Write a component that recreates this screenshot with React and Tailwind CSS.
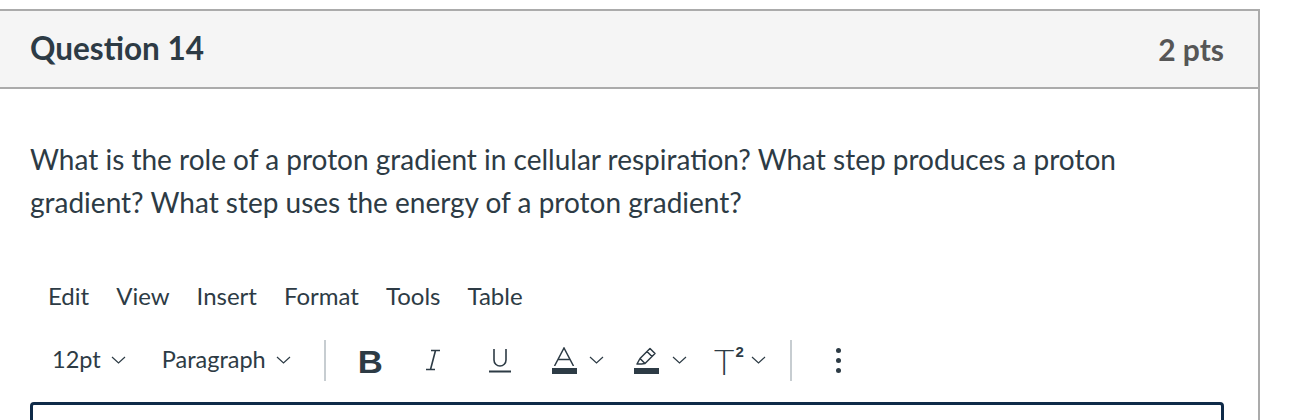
import React from "react";

const Chev = ({ className = "" }) => (
  <svg className={className} width="15" height="8" viewBox="0 0 15 8" fill="none">
    <path d="M1 1 L7.5 7 L14 1" stroke="#2d3b45" strokeWidth="1.2" />
  </svg>
);

export default function App() {
  return (
    <div className="w-[1306px] h-[420px] overflow-hidden bg-white pt-[9px]" style={{ fontFamily: "Lato, 'Liberation Sans', sans-serif" }}>
      <div className="w-[1260px] border-t-2 border-r-2 border-[#ababab]">
        <div className="h-[78px] bg-[#f5f5f5] border-b-2 border-[#ababab] flex items-center justify-between pl-[30px] pr-[34px]">
          <div className="text-[31.5px] font-bold text-[#2d3b45] leading-none">Question 14</div>
          <div className="text-[30px] font-bold text-[#565656] leading-none">2 pts</div>
        </div>
        <div className="pl-[30px] pt-[49px]">
          <p className="text-[28px] leading-[43px] text-[#2d3b45] w-[1120px]">
            What is the role of a proton gradient in cellular respiration? What step produces a proton gradient? What step uses the energy of a proton gradient?
          </p>
          <div className="mt-[57px] flex items-center gap-[27px] pl-[18px] text-[24px] text-[#2d3b45] h-[30px]">
            <span>Edit</span>
            <span>View</span>
            <span>Insert</span>
            <span>Format</span>
            <span>Tools</span>
            <span>Table</span>
          </div>
          <div className="mt-[27px] flex items-center h-[44px] pl-[22px] text-[23.5px] text-[#2d3b45]">
            <span>12pt</span>
            <Chev className="ml-[10px]" />
            <span className="ml-[36px]">Paragraph</span>
            <Chev className="ml-[10px]" />
            <div className="ml-[33px] w-[2px] h-[41px] bg-[#c7cdd1]" />
            <div className="ml-[32px] w-[24px] flex justify-center">
              <span className="inline-block text-[31px] font-bold leading-none scale-x-[1.12] mt-[5px]" style={{ fontFamily: "'Liberation Sans', Arial, sans-serif" }}>B</span>
            </div>
            <svg className="ml-[43px]" width="16" height="22" viewBox="0 0 16 22" fill="none">
              <path d="M6 1.5 H15 M1 20.5 H10 M10.5 1.5 L5.5 20.5" stroke="#2d3b45" strokeWidth="1.6" />
            </svg>
            <svg className="ml-[48px]" width="22" height="25" viewBox="0 0 22 25" fill="none">
              <path d="M5 1 V12 A6 6 0 0 0 17 12 V1" stroke="#2d3b45" strokeWidth="1.6" />
              <rect x="0" y="22.5" width="22" height="2" fill="#2d3b45" />
            </svg>
            <div className="ml-[41px] flex flex-col items-center w-[25px]">
              <svg width="22" height="19" viewBox="0 0 22 19" fill="none">
                <path d="M1.5 19 L11 1 L20.5 19 M5 12.5 H17" stroke="#2d3b45" strokeWidth="1.5" />
              </svg>
              <div className="w-[25px] h-[6px] bg-[#2d3b45] mt-[2px]" />
            </div>
            <Chev className="ml-[12px]" />
            <div className="ml-[30px] flex flex-col items-center w-[25px]">
              <svg width="22" height="19" viewBox="0 0 22 19" fill="none">
                <path d="M15 1.5 L20 6.5 L10 16.5 L5 11.5 Z M5 11.5 L2 17 L6.5 17 L10 16.5 M12 4.5 L17 9.5" stroke="#2d3b45" strokeWidth="1.5" strokeLinejoin="round" />
              </svg>
              <div className="w-[25px] h-[6px] bg-[#2d3b45] mt-[2px]" />
            </div>
            <Chev className="ml-[13px]" />
            <div className="ml-[27px] w-[31px] flex items-start">
              <span className="text-[34px] leading-none mt-[5px]" style={{ fontFamily: "'DejaVu Sans', sans-serif", fontWeight: 300 }}>T</span>
              <span className="text-[15px] font-bold leading-none ml-[1px] mt-[3px]" style={{ fontFamily: "'Liberation Sans', sans-serif" }}>2</span>
            </div>
            <Chev className="ml-[6px]" />
            <div className="ml-[24px] w-[2px] h-[41px] bg-[#c7cdd1]" />
            <div className="ml-[44px] flex flex-col gap-[5px]">
              <div className="w-[5px] h-[5px] rounded-full bg-[#2d3b45]" />
              <div className="w-[5px] h-[5px] rounded-full bg-[#2d3b45]" />
              <div className="w-[5px] h-[5px] rounded-full bg-[#2d3b45]" />
            </div>
          </div>
          <div className="mt-[20px] w-[1194px] h-[40px] border-[3px] border-[#0f2a48] rounded-[4px]" />
        </div>
      </div>
    </div>
  );
}
